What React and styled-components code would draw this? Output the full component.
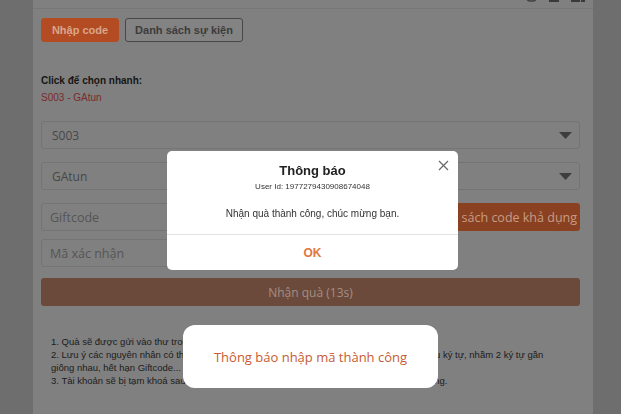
import React from 'react';
import styled, { createGlobalStyle } from 'styled-components';

const GlobalStyle = createGlobalStyle`
  html, body {
    margin: 0;
    padding: 0;
    background: #6e6e6e;
    width: 621px;
    height: 414px;
    overflow: hidden;
    font-family: "Liberation Sans", Arial, sans-serif;
  }
`;

const Panel = styled.div`
  margin-left: 33px;
  width: 560px;
  height: 414px;
  background: #808080;
  box-sizing: border-box;
`;

const Header = styled.div`
  height: 8px;
  border-bottom: 1px solid #777777;
  display: flex;
  justify-content: flex-end;
  align-items: flex-end;
  gap: 12px;
  padding-right: 8px;
  overflow: hidden;
`;

const HeadIcon = styled.svg`
  display: block;
  margin-bottom: 6px;
  flex: none;
`;

const Body = styled.div`
  padding: 9px 13px 0 8px;
`;

const Tabs = styled.div`
  display: flex;
  gap: 6px;
`;

const Tab = styled.button`
  height: 24px;
  padding: 0;
  border-radius: 3px;
  font-family: "Liberation Sans", Arial, sans-serif;
  font-weight: bold;
  font-size: 11px;
  white-space: nowrap;
  cursor: pointer;
  background: ${(p) => (p.$active ? '#b34c22' : '#838383')};
  color: ${(p) => (p.$active ? '#d9a68c' : '#3c3c3c')};
  border: 1px solid ${(p) => (p.$active ? '#b34c22' : '#474747')};
  width: ${(p) => p.$w}px;
`;

const QuickLabel = styled.div`
  margin-top: 33px;
  font-size: 10px;
  font-weight: bold;
  color: #161616;
  line-height: 12px;
`;

const QuickLink = styled.div`
  margin-top: 5px;
  font-size: 10px;
  color: #7b2a2a;
  line-height: 12px;
`;

const Form = styled.div`
  margin-top: 17px;
  display: flex;
  flex-direction: column;
`;

const Select = styled.div`
  height: 28px;
  box-sizing: border-box;
  border: 1px solid #747474;
  border-radius: 3px;
  display: flex;
  align-items: center;
  justify-content: space-between;
  padding: 0 7px 0 10px;
  margin-bottom: ${(p) => p.$mb}px;
  font-family: "Open Sans", sans-serif;
  font-size: 12px;
  color: #474747;
`;

const Row = styled.div`
  display: flex;
  margin-bottom: ${(p) => p.$mb}px;
`;

const Field = styled.div`
  height: 28px;
  box-sizing: border-box;
  border: 1px solid #747474;
  border-radius: 3px;
  display: flex;
  align-items: center;
  padding: 0 8px;
  width: ${(p) => (p.$w ? `${p.$w}px` : 'auto')};
  flex: ${(p) => (p.$w ? 'none' : '1')};
  font-family: "Open Sans", sans-serif;
  font-size: 12.5px;
  color: #555555;
`;

const ListButton = styled.div`
  height: 28px;
  background: #8a4121;
  border-radius: 0 3px 3px 0;
  display: flex;
  align-items: center;
  padding: 0 3px 0 5px;
  font-family: "Open Sans", sans-serif;
  font-size: 12.5px;
  color: #c79c86;
  white-space: nowrap;
`;

const SubmitButton = styled.div`
  margin-top: 11px;
  height: 28px;
  border-radius: 3px;
  background: #6b4a3c;
  display: flex;
  align-items: center;
  justify-content: center;
  font-family: "Open Sans", sans-serif;
  font-size: 12px;
  color: #a38e83;
`;

const Notes = styled.div`
  margin-top: 29px;
  padding-left: 10px;
  font-size: 9.5px;
  line-height: 13px;
  color: #1c1c1c;
  white-space: nowrap;
`;

const Backdrop = styled.div`
  position: fixed;
  inset: 0;
`;

const Dialog = styled.div`
  position: absolute;
  left: 167px;
  top: 151px;
  width: 291px;
  height: 119px;
  background: #ffffff;
  border-radius: 5px;
  display: flex;
  flex-direction: column;
`;

const DialogBody = styled.div`
  height: 83px;
  display: flex;
  flex-direction: column;
  align-items: center;
  border-bottom: 1px solid #e3e3e3;
  position: relative;
`;

const DialogTitle = styled.div`
  margin-top: 12px;
  font-size: 13px;
  font-weight: bold;
  color: #222222;
  line-height: 16px;
`;

const UserId = styled.div`
  margin-top: 3px;
  font-size: 8px;
  color: #333333;
  line-height: 10px;
`;

const Message = styled.div`
  margin-top: 16px;
  font-size: 10px;
  color: #333333;
  line-height: 12px;
`;

const Close = styled.svg`
  position: absolute;
  right: 9px;
  top: 9px;
`;

const OkButton = styled.div`
  flex: 1;
  display: flex;
  align-items: center;
  justify-content: center;
  font-size: 12px;
  font-weight: bold;
  color: #e2763f;
`;

const Toast = styled.div`
  position: absolute;
  left: 183px;
  top: 325px;
  width: 255px;
  height: 63px;
  background: #ffffff;
  border-radius: 12px;
  display: flex;
  align-items: center;
  justify-content: center;
  font-family: "Open Sans", sans-serif;
  font-size: 13px;
  color: #c75b34;
`;

const Caret = () => (
  <svg width="13" height="7" viewBox="0 0 13 7">
    <path d="M0 0 L13 0 L6.5 7 Z" fill="#3d3d3d" />
  </svg>
);

export default function App() {
  return (
    <>
      <GlobalStyle />
      <Panel>
        <Header>
          <HeadIcon width="11" height="12" viewBox="0 0 11 12">
            <rect x="1" y="0" width="9" height="11" rx="3" fill="none" stroke="#3f3f3f" strokeWidth="1.4" />
          </HeadIcon>
          <HeadIcon width="10" height="12" viewBox="0 0 10 12">
            <rect x="0" y="9" width="10" height="3" fill="#3a3a3a" />
          </HeadIcon>
          <HeadIcon width="14" height="12" viewBox="0 0 14 12">
            <rect x="0" y="8" width="9" height="4" fill="#3a3a3a" />
            <rect x="10" y="6" width="4" height="6" fill="#3a3a3a" />
          </HeadIcon>
        </Header>
        <Body>
          <Tabs>
            <Tab $active $w={78}>Nhập code</Tab>
            <Tab $w={118}>Danh sách sự kiện</Tab>
          </Tabs>
          <QuickLabel>Click để chọn nhanh:</QuickLabel>
          <QuickLink>S003 - GAtun</QuickLink>
          <Form>
            <Select $mb={13}>
              <span>S003</span>
              <Caret />
            </Select>
            <Select $mb={13}>
              <span>GAtun</span>
              <Caret />
            </Select>
            <Row $mb={8}>
              <Field>Giftcode</Field>
              <ListButton>Danh sách code khả dụng</ListButton>
            </Row>
            <Row $mb={0}>
              <Field $w={260}>Mã xác nhận</Field>
            </Row>
            <SubmitButton>Nhận quà (13s)</SubmitButton>
          </Form>
          <Notes>
            <div>1. Quà sẽ được gửi vào thư trong game, vui lòng kiểm tra.</div>
            <div>
              2. Lưu ý các nguyên nhân có thể nhập lỗi: Sai server, sai nhân vật, thiếu hoặc thừa rất nhiều ký tự, nhầm 2 ký tự gần
              <br />
              giống nhau, hết hạn Giftcode...
            </div>
            <div>3. Tài khoản sẽ bị tạm khoá sau 5 lần nhập sai liên tục, vui lòng kiểm tra kỹ trước khi sử dụng.</div>
          </Notes>
        </Body>
      </Panel>
      <Backdrop>
        <Dialog>
          <DialogBody>
            <DialogTitle>Thông báo</DialogTitle>
            <UserId>User Id: 1977279430908674048</UserId>
            <Message>Nhận quà thành công, chúc mừng bạn.</Message>
            <Close width="11" height="11" viewBox="0 0 11 11">
              <path d="M1 1 L10 10 M10 1 L1 10" stroke="#6a6a6a" strokeWidth="1.3" />
            </Close>
          </DialogBody>
          <OkButton>OK</OkButton>
        </Dialog>
        <Toast>Thông báo nhập mã thành công</Toast>
      </Backdrop>
    </>
  );
}
